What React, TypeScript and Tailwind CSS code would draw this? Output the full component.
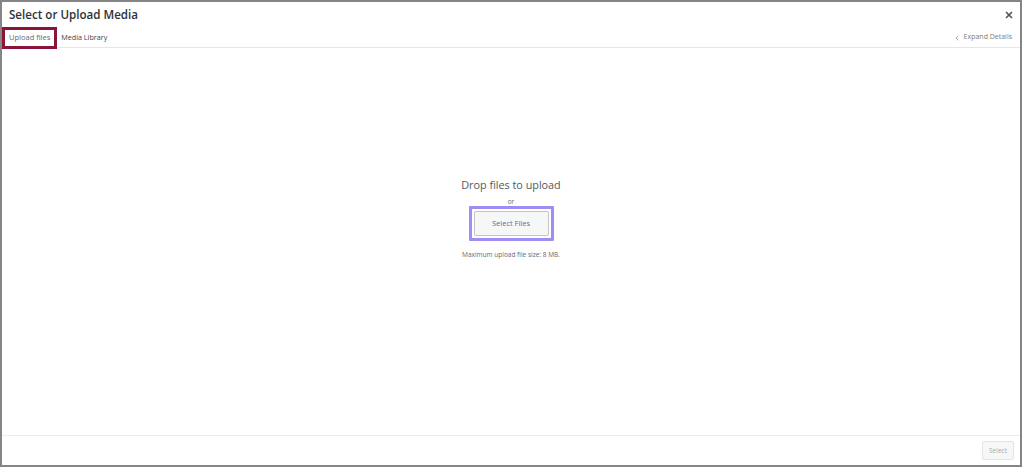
import { ChevronLeft, X } from 'lucide-react'

const font = { fontFamily: '"Open Sans", "Noto Sans", sans-serif' }

export default function App() {
  return (
    <div className="h-[469px] w-[1024px] bg-white" style={font}>
      <div className="flex h-[467px] w-[1022px] flex-col border-2 border-[#858585]">
        {/* title bar */}
        <div className="flex h-[25px] items-center justify-between pl-[7px] pr-[6px]">
          <h1 className="text-[11.6px] font-semibold leading-none text-[#2c3338]">
            Select or Upload Media
          </h1>
          <X size={10} strokeWidth={4} className="text-[#50575e]" />
        </div>

        {/* router tabs */}
        <div className="flex h-[21px] items-center justify-between border-b border-[#e6e6e6] pr-[8px]">
          <div className="flex h-full items-start">
            <span className="flex h-[22px] items-center border-[3px] border-[#8a1538] px-[4px] text-[7.5px] text-[#646970]">
              Upload files
            </span>
            <span className="ml-[4px] mt-[5px] text-[7.2px] text-[#3c434a]">Media Library</span>
          </div>
          <div className="mt-[1px] flex items-center gap-[3px] text-[7px] text-[#787c82]">
            <ChevronLeft size={8} strokeWidth={2} />
            <span>Expand Details</span>
          </div>
        </div>

        {/* uploader */}
        <div className="flex flex-1 flex-col items-center pt-[130px]">
          <p className="text-[10.8px] leading-[14px] text-[#50575e]">Drop files to upload</p>
          <p className="mt-[6px] text-[6.5px] leading-[8px] text-[#646970]">or</p>
          <div className="rounded-[1px] border-[3px] border-[#9d8df4] bg-white p-[2px]">
            <button
              type="button"
              className="flex h-[25px] w-[75px] items-center justify-center rounded-[2px] border border-[#c3c4c7] bg-[#f6f7f7] text-[7.5px] text-[#4a74b0]"
            >
              Select Files
            </button>
          </div>
          <p className="mt-[9px] text-[6.5px] text-[#646970]">Maximum upload file size: 8 MB.</p>
        </div>

        {/* toolbar */}
        <div className="flex h-[30px] items-center justify-end border-t border-[#ececec] pr-[6px]">
          <button
            type="button"
            className="flex h-[19px] w-[32px] items-center justify-center rounded-[2px] border border-[#e2e4e7] bg-[#f6f7f7] text-[6.5px] text-[#a7aaad]"
          >
            Select
          </button>
        </div>
      </div>
    </div>
  )
}
